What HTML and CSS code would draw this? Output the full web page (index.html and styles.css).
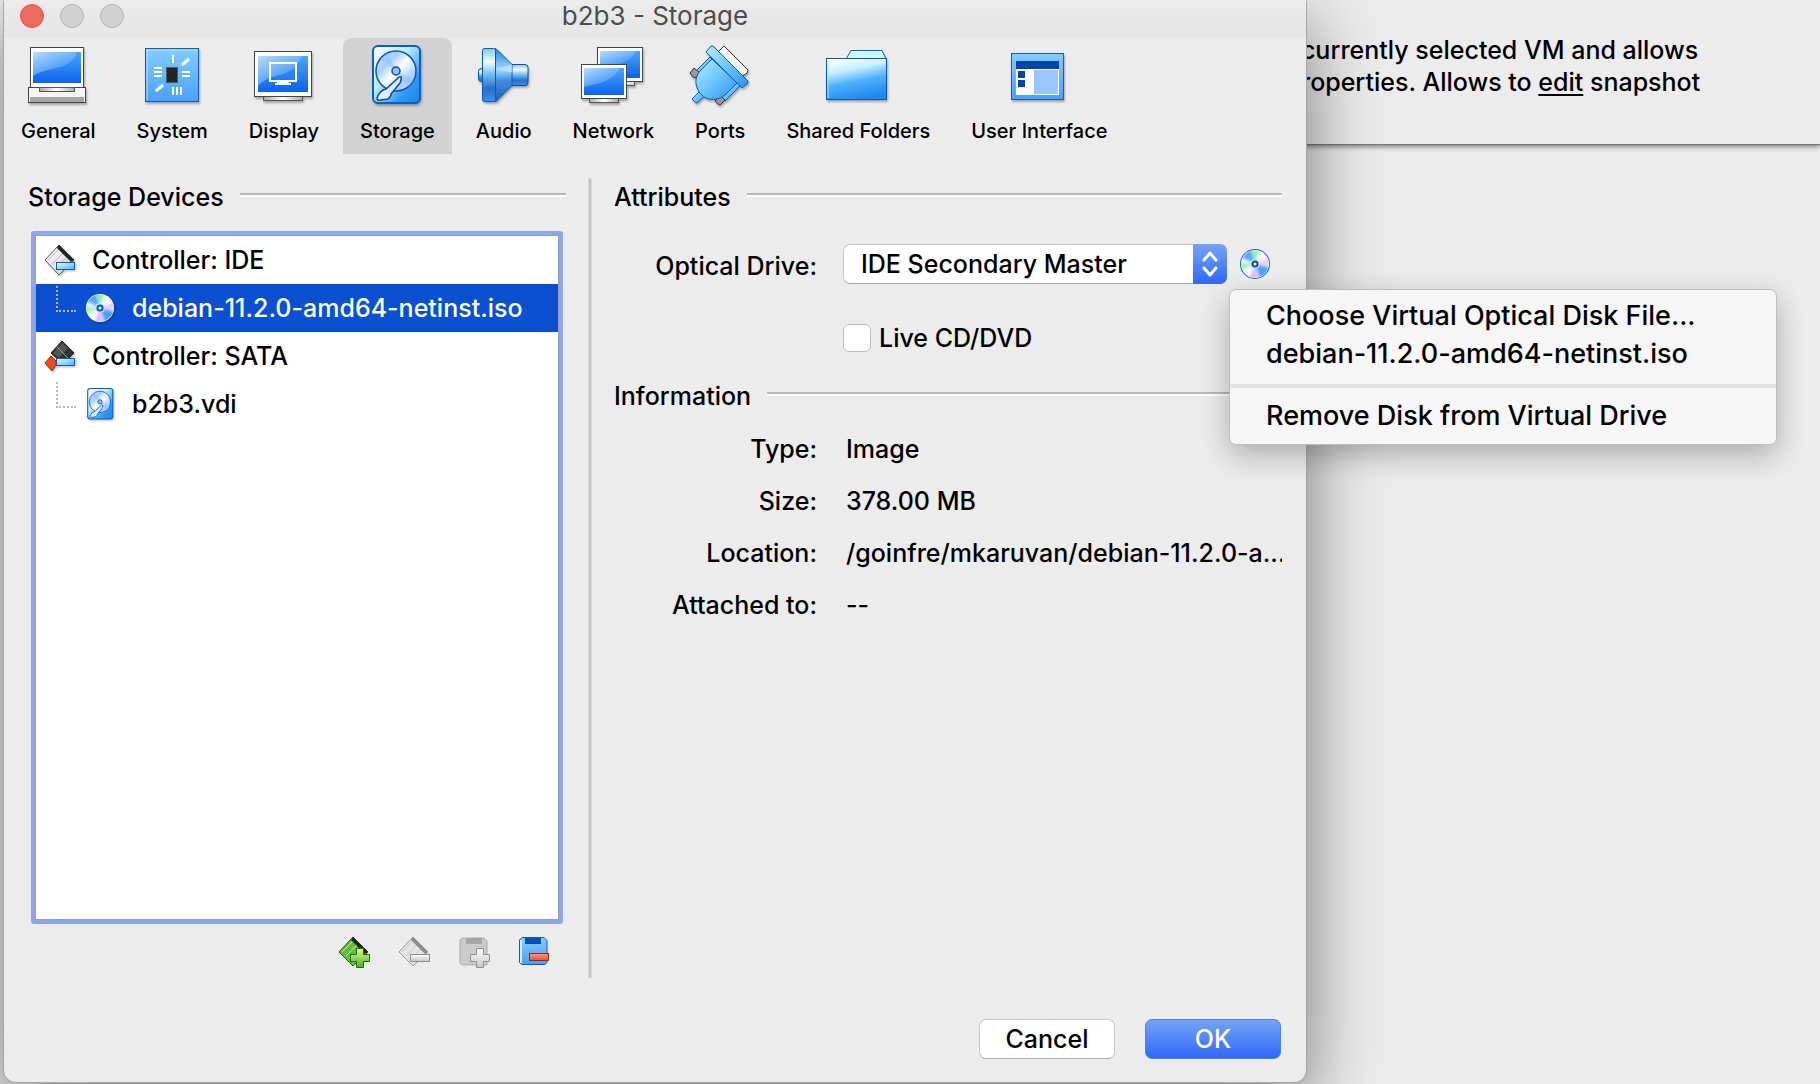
FILE: index.html
```html
<!DOCTYPE html>
<html lang="en">
<head>
	<meta charset="UTF-8">
	<title>b2b3 - Storage</title>
	<link rel="stylesheet" href="styles.css">
</head>
<body>
	<!-- shared gradients and symbols -->
	<svg class="defs" width="0" height="0" aria-hidden="true">
		<defs>
			<linearGradient id="screen" x1="0" y1="0" x2="0" y2="1">
				<stop offset="0" stop-color="#4aa5fb"/><stop offset="1" stop-color="#0c62ee"/>
			</linearGradient>
			<linearGradient id="gloss" x1="0" y1="0" x2="1" y2="1">
				<stop offset="0" stop-color="#b8dcff"/><stop offset="1" stop-color="#6cb2fb" stop-opacity="0.1"/>
			</linearGradient>
			<linearGradient id="panel" x1="0" y1="0" x2="0" y2="1">
				<stop offset="0" stop-color="#85ccff"/><stop offset="1" stop-color="#49a1fb"/>
			</linearGradient>
			<linearGradient id="silver" x1="0" y1="0" x2="0" y2="1">
				<stop offset="0" stop-color="#ffffff"/><stop offset="1" stop-color="#c4c4c4"/>
			</linearGradient>
			<linearGradient id="stand" x1="0" y1="0" x2="1" y2="0">
				<stop offset="0" stop-color="#aaaaaa"/><stop offset="0.5" stop-color="#ffffff"/><stop offset="1" stop-color="#aaaaaa"/>
			</linearGradient>
			<linearGradient id="diskbody" x1="0" y1="0" x2="1" y2="1">
				<stop offset="0" stop-color="#ffffff"/><stop offset="0.4" stop-color="#b9ecff"/><stop offset="0.75" stop-color="#2d98f2"/><stop offset="1" stop-color="#1a86ea"/>
			</linearGradient>
			<linearGradient id="platter" x1="0" y1="0" x2="1" y2="1">
				<stop offset="0" stop-color="#cfe5ff"/><stop offset="0.3" stop-color="#a6cfff"/><stop offset="0.5" stop-color="#ffffff"/><stop offset="0.75" stop-color="#a4cfff"/><stop offset="1" stop-color="#eaf5ff"/>
			</linearGradient>
			<linearGradient id="horn" x1="0" y1="0" x2="0" y2="1">
				<stop offset="0" stop-color="#7fcaf8"/><stop offset="0.25" stop-color="#f2fbff"/><stop offset="0.5" stop-color="#6bbcf4"/><stop offset="0.75" stop-color="#2a6fcc"/><stop offset="1" stop-color="#3c8de8"/>
			</linearGradient>
			<linearGradient id="cone" x1="0" y1="0" x2="0" y2="1">
				<stop offset="0" stop-color="#2a80d8"/><stop offset="0.4" stop-color="#9adcff"/><stop offset="0.6" stop-color="#3f8fe0"/><stop offset="1" stop-color="#1f5cba"/>
			</linearGradient>
			<linearGradient id="plug" x1="0" y1="0" x2="1" y2="1">
				<stop offset="0" stop-color="#b8eaff"/><stop offset="0.5" stop-color="#6ac6fc"/><stop offset="1" stop-color="#2f90e8"/>
			</linearGradient>
			<linearGradient id="folder" x1="0.2" y1="0" x2="0.5" y2="1">
				<stop offset="0" stop-color="#ffffff"/><stop offset="0.3" stop-color="#c4efff"/><stop offset="0.6" stop-color="#4db0fa"/><stop offset="1" stop-color="#2089ee"/>
			</linearGradient>
			<linearGradient id="cyan" x1="0" y1="0" x2="1" y2="1">
				<stop offset="0" stop-color="#e6fbff"/><stop offset="1" stop-color="#4ab4fa"/>
			</linearGradient>
			<linearGradient id="chip" x1="0" y1="0" x2="1" y2="1">
				<stop offset="0" stop-color="#ffffff"/><stop offset="1" stop-color="#cccccc"/>
			</linearGradient>
			<linearGradient id="green" x1="0" y1="0" x2="0" y2="1">
				<stop offset="0" stop-color="#d9f99a"/><stop offset="1" stop-color="#46b520"/>
			</linearGradient>
			<linearGradient id="red" x1="0" y1="0" x2="0" y2="1">
				<stop offset="0" stop-color="#ff9d7c"/><stop offset="1" stop-color="#ef5030"/>
			</linearGradient>
			<filter id="soften" x="0" y="0" width="1" height="1">
				<feGaussianBlur stdDeviation="1.5"/>
			</filter>
			<clipPath id="round">
				<circle cx="15" cy="16" r="13.500"/>
			</clipPath>
			<symbol id="hard-disk" viewBox="0 0 50 60">
				<rect x="1" y="1" width="47" height="57" rx="5" fill="url(#diskbody)" stroke="#0b5fc0" stroke-width="2"/>
				<circle cx="24" cy="26" r="20" fill="url(#platter)" stroke="#1050b0" stroke-width="1.5"/>
				<path d="M24 26L8 14A20 20 0 0 1 16 8ZM24 26L42 34A20 20 0 0 1 36 42Z" fill="#7fb9fb" opacity="0.4"/>
				<circle cx="24" cy="26" r="4" fill="#8cc3f8" stroke="#0c4aa4" stroke-width="1.5"/>
				<path d="M29 32q-2-1-4 2L14 44q-6 1-9 9q0 3 4 2l7-1q3-2 3-5l9-11q2-4 1-6Z" fill="#dceeff" stroke="#0c4aa4" stroke-width="1.5"/>
			</symbol>
			<symbol id="optical-disk" viewBox="0 0 30 32">
				<circle cx="15" cy="16" r="14" fill="#ffffff"/>
				<g clip-path="url(#round)">
					<g filter="url(#soften)">
						<rect width="30" height="32" fill="#f4fbff"/>
						<path d="M15 16L0 9 3 0 11 0Z" fill="#55a8ff"/>
						<path d="M15 16L12 0 20 0Z" fill="#95f58c"/>
						<path d="M15 16L30 9 30 17Z" fill="#f7c6ee"/>
						<path d="M15 16L30 19 30 30 20 32Z" fill="#45a2ff"/>
						<path d="M15 16L18 32 9 32Z" fill="#e9b2f8"/>
						<path d="M15 16L0 23 0 14Z" fill="#a0f5a4"/>
					</g>
				</g>
				<circle cx="15" cy="16" r="5" fill="#c3e2ff"/>
				<circle cx="15" cy="16" r="2.500" fill="#ffffff" stroke="#0c4fae" stroke-width="2"/>
			</symbol>
			<symbol id="chevrons" viewBox="0 0 34 40">
				<path d="M11 16l6-7 6 7M11 24l6 7 6-7" fill="none" stroke="#ffffff" stroke-width="3" stroke-linecap="round" stroke-linejoin="round"/>
			</symbol>
		</defs>
	</svg>

	<div class="desktop">
		<!-- manager window behind the dialog -->
		<div class="manager">
			<p class="hint">currently selected VM and allows<br>roperties. Allows to <a href="#">edit</a> snapshot</p>
		</div>

		<div class="dialog">
			<header class="titlebar">
				<div class="lights">
					<button class="light close" aria-label="Close"></button>
					<button class="light" aria-label="Minimize"></button>
					<button class="light" aria-label="Zoom"></button>
				</div>
				<h1>b2b3 - Storage</h1>
			</header>

			<nav class="toolbar">
				<button class="tab">
					<svg viewBox="0 0 64 64">
						<rect x="4.500" y="3.500" width="53" height="41" fill="#fff" stroke="#444"/>
						<rect x="7" y="8" width="48" height="31" fill="url(#screen)"/>
						<path d="M7 8h44q-4 13-24 17Q14 27 7 32Z" fill="url(#gloss)"/>
						<rect x="2.500" y="43.500" width="57" height="15" fill="#f4f4f4" stroke="#444"/>
						<rect x="4" y="53" width="54" height="5" fill="#a4a4a4"/>
						<rect x="13.500" y="43.500" width="35" height="4" fill="url(#stand)" stroke="#555"/>
					</svg>
					<span>General</span>
				</button>
				<button class="tab">
					<svg viewBox="0 0 64 64">
						<rect x="5.500" y="4.500" width="53" height="53" fill="url(#panel)" stroke="#0f5fb8"/>
						<path d="M7 56V6H57" fill="none" stroke="#b5e1ff"/>
						<path d="M33 11v8M14 24h8M14 28h8M14 32h8M42 28h8M42 32h8M33 43v8M37 43v8M41 43v8" fill="none" stroke="#fff" stroke-width="2"/>
						<path d="M42 21l7-6M16 47l7-6" stroke="#fff" stroke-width="3"/>
						<rect x="26.500" y="23.500" width="11" height="15" fill="#242424" stroke="#555"/>
					</svg>
					<span>System</span>
				</button>
				<button class="tab">
					<svg viewBox="0 0 64 64">
						<rect x="11.500" y="52.500" width="39" height="4" fill="url(#stand)" stroke="#555"/>
						<rect x="2.500" y="7.500" width="57" height="45" fill="#fff" stroke="#444"/>
						<rect x="6" y="12" width="50" height="36" fill="url(#screen)"/>
						<path d="M6 12h44q-6 16-26 20Q12 35 6 42Z" fill="url(#gloss)"/>
						<path d="M18 19h26v18H18ZM26 38h10v2H26ZM23 40h16" fill="none" stroke="#fff" stroke-width="2"/>
					</svg>
					<span>Display</span>
				</button>
				<button class="tab active">
					<svg viewBox="0 0 64 64"><use href="#hard-disk" x="7" y="1" width="50" height="60"/></svg>
					<span>Storage</span>
				</button>
				<button class="tab">
					<svg viewBox="0 0 64 64">
						<rect x="6.500" y="24.500" width="6" height="13" rx="3" fill="url(#horn)" stroke="#0c4aa4"/>
						<path d="M39 20.500h14q3 0 3 3v15q0 3-3 3H39Z" fill="url(#horn)" stroke="#0c4aa4"/>
						<path d="M23 4.500q2 1 3 2l14 14v21l-14 14q-1 2-3 2Z" fill="url(#cone)" stroke="#0c5ab8"/>
						<path d="M24 25L40 20.500v8Z" fill="#bfe8ff" opacity="0.7"/>
						<rect x="10.500" y="4.500" width="13" height="53" rx="2" fill="url(#horn)" stroke="#0c5ab8"/>
					</svg>
					<span>Audio</span>
				</button>
				<button class="tab">
					<svg viewBox="0 0 64 64">
						<rect x="40.500" y="36.500" width="13" height="5" fill="url(#silver)" stroke="#555"/>
						<rect x="16.500" y="3.500" width="45" height="34" fill="#fff" stroke="#444"/>
						<rect x="19" y="7" width="40" height="27" fill="url(#screen)"/>
						<path d="M19 7h36q-6 11-20 14L19 24Z" fill="url(#gloss)"/>
						<rect x="8.500" y="54.500" width="29" height="4" fill="url(#stand)" stroke="#555"/>
						<rect x="0.500" y="20.500" width="45" height="34" fill="#fff" stroke="#444"/>
						<rect x="3" y="24" width="40" height="27" fill="url(#screen)"/>
						<path d="M3 24h36q-6 11-20 15L3 43Z" fill="url(#gloss)"/>
					</svg>
					<span>Network</span>
				</button>
				<button class="tab">
					<svg viewBox="0 0 64 64">
						<path d="M30 8l6-6 24 24-1 3-6 4Z" fill="#f6f6f6" stroke="#333"/>
						<path d="M22 13l5 5-15 15-5-5Z" fill="url(#plug)" stroke="#0c5ab8"/>
						<path d="M6 24l6 5-5 5q-3-1-5-5Z" fill="#999" stroke="#333"/>
						<path d="M48 36l5 5-16 16-5-5Z" fill="url(#plug)" stroke="#0c5ab8"/>
						<path d="M32 51l5 5-5 5q-3-1-5-4Z" fill="#999" stroke="#333"/>
						<path d="M14 45l5 5-10 9q-3-1-5-4Z" fill="url(#plug)" stroke="#0c5ab8"/>
						<path d="M24 15L13 26q-6 6-5 14 2 11 12 15 11 2 18-5L49 39Z" fill="url(#plug)" stroke="#0c5ab8"/>
						<path d="M18 8l5-6h2L60 37v2l-6 5Z" fill="url(#plug)" stroke="#0c5ab8"/>
					</svg>
					<span>Ports</span>
				</button>
				<button class="tab">
					<svg viewBox="0 0 64 64">
						<path d="M20 15l5-8.500h31l4 8.500Z" fill="#c9faff" stroke="#0c63bd"/>
						<rect x="0.500" y="14.500" width="60" height="41" fill="url(#folder)" stroke="#0c55b0"/>
						<path d="M2 54V16" stroke="#9ff0ff"/>
					</svg>
					<span>Shared Folders</span>
				</button>
				<button class="tab">
					<svg viewBox="0 0 64 64">
						<rect x="4.500" y="9.500" width="52" height="46" fill="url(#panel)" stroke="#0f5fb8"/>
						<rect x="9" y="17" width="43" height="34" fill="#fff"/>
						<rect x="9" y="17" width="43" height="8" fill="#0345a8"/>
						<path d="M11 27h7v7h-7ZM11 36h7v7h-7Z" fill="#0345a8"/>
						<rect x="27" y="26" width="24" height="24" fill="#99c6ff"/>
					</svg>
					<span>User Interface</span>
				</button>
			</nav>

			<main class="content">
				<section class="devices">
					<h2 class="group-title">Storage Devices</h2>
					<ul class="tree">
						<li class="row">
							<svg class="icon" viewBox="0 0 32 32">
								<path d="M15 1L30 16 15 31 1 16Z" fill="url(#chip)" stroke="#555"/>
								<path d="M4 16l11-11M8 20l11-11M12 24l11-11" stroke="#bbb"/>
								<path d="M15 1l15 15-3 2L13 4Z" fill="#222"/>
								<rect x="12.500" y="18.500" width="18" height="7" fill="url(#cyan)" stroke="#0b5fc0"/>
							</svg>
							<span>Controller: IDE</span>
						</li>
						<li class="row child selected">
							<svg class="icon" viewBox="0 0 32 32"><use href="#optical-disk" x="1" y="0" width="30" height="32"/></svg>
							<span>debian-11.2.0-amd64-netinst.iso</span>
						</li>
						<li class="row">
							<svg class="icon" viewBox="0 0 32 32">
								<path d="M18 1l12 12-11 11L7 13Z" fill="#333" stroke="#222"/>
								<path d="M18 3l-9 10 6 5 9-10Z" fill="#555"/>
								<path d="M13 7l12 12" stroke="#999"/>
								<path d="M7 16l5 5v4l-4 6-7-8Z" fill="#f04a18" stroke="#a02808"/>
								<rect x="12.500" y="18.500" width="18" height="7" fill="url(#cyan)" stroke="#0b5fc0"/>
							</svg>
							<span>Controller: SATA</span>
						</li>
						<li class="row child">
							<svg class="icon" viewBox="0 0 32 32"><use href="#hard-disk" x="3" y="0" width="27" height="32"/></svg>
							<span>b2b3.vdi</span>
						</li>
					</ul>
					<div class="tools">
						<button class="tool" aria-label="Add controller">
							<svg viewBox="0 0 32 32">
								<path d="M15 1L30 16 15 30 1 16Z" fill="#63bd3a" stroke="#1c5c0c"/>
								<path d="M4 16l11-11M8 20l11-11M12 24l11-11" stroke="#b9ee90"/>
								<path d="M15 1l15 15-3 2L13 4Z" fill="#222"/>
								<path d="M18.500 12.500h7v6h6v7h-6v6h-7v-6h-6v-7h6Z" fill="url(#green)" stroke="#1f6b10"/>
							</svg>
						</button>
						<button class="tool" aria-label="Remove controller" disabled>
							<svg viewBox="0 0 32 32">
								<path d="M15 1L30 16 15 30 1 16Z" fill="#e4e4e4" stroke="#999"/>
								<path d="M4 16l11-11M8 20l11-11M12 24l11-11" stroke="#c8c8c8"/>
								<path d="M15 1l15 15-3 2L13 4Z" fill="#8d8d8d"/>
								<rect x="12.500" y="18.500" width="19" height="7" fill="url(#silver)" stroke="#8f8f8f"/>
							</svg>
						</button>
						<button class="tool" aria-label="Add attachment" disabled>
							<svg viewBox="0 0 32 32">
								<path d="M4 2h22l3 3v24H4l-2-2V4Z" fill="#cbcbcb" stroke="#aaa" stroke-linejoin="round"/>
								<rect x="8" y="2" width="16" height="6" fill="#a5a5a5"/>
								<path d="M18.500 12.500h7v6h6v7h-6v6h-7v-6h-6v-7h6Z" fill="url(#silver)" stroke="#8f8f8f"/>
							</svg>
						</button>
						<button class="tool" aria-label="Remove attachment">
							<svg viewBox="0 0 32 32">
								<path d="M4 1.500h22l3 3v22l-2 2H4l-2.500-2V4Z" fill="url(#panel)" stroke="#0b5fc0" stroke-linejoin="round"/>
								<path d="M3 27V4" stroke="#cdf0ff" stroke-width="2"/>
								<rect x="7" y="2" width="16" height="6" fill="#0450b4"/>
								<rect x="11.500" y="17.500" width="19" height="7" fill="url(#red)" stroke="#a8200c"/>
							</svg>
						</button>
					</div>
				</section>

				<div class="divider"></div>

				<section class="details">
					<h2 class="group-title">Attributes</h2>
					<div class="form">
						<label class="label" for="drive">Optical Drive:</label>
						<div class="drive">
							<div class="select">
								<select id="drive">
									<option>IDE Secondary Master</option>
								</select>
								<span class="arrows"><svg viewBox="0 0 34 40"><use href="#chevrons"/></svg></span>
							</div>
							<div class="disk-menu">
								<button class="disk" aria-label="Choose disk">
									<svg viewBox="0 0 32 32"><circle cx="16" cy="16" r="15" fill="#1260c0"/><use href="#optical-disk" x="1" y="0" width="30" height="32"/></svg>
								</button>
								<ul class="menu">
									<li><button>Choose Virtual Optical Disk File...</button></li>
									<li><button>debian-11.2.0-amd64-netinst.iso</button></li>
									<li class="separator"></li>
									<li><button>Remove Disk from Virtual Drive</button></li>
								</ul>
							</div>
						</div>
						<div class="check">
							<input type="checkbox" id="live">
							<label for="live">Live CD/DVD</label>
						</div>
					</div>

					<h2 class="group-title">Information</h2>
					<dl class="info">
						<dt>Type:</dt>
						<dd>Image</dd>
						<dt>Size:</dt>
						<dd>378.00 MB</dd>
						<dt>Location:</dt>
						<dd>/goinfre/mkaruvan/debian-11.2.0-a...</dd>
						<dt>Attached to:</dt>
						<dd>--</dd>
					</dl>
				</section>
			</main>

			<footer class="actions">
				<button class="btn">Cancel</button>
				<button class="btn primary">OK</button>
			</footer>
		</div>
	</div>
</body>
</html>
```

FILE: styles.css
```css
* {
	box-sizing: border-box;
}

body, ul, li, dl, dt, dd, h1, h2, p {
	margin: 0;
	padding: 0;
}

body {
	font: 500 25px/32px Inter, "Liberation Sans", sans-serif;
	color: #000;
	background-color: #ECECEC;
}

ul {
	list-style: none;
}

h1, h2 {
	font-size: inherit;
	font-weight: inherit;
}

button, select, input {
	margin: 0;
	padding: 0;
	font: inherit;
	color: inherit;
	border: 0;
	background: none;
}

svg {
	display: block;
}

.defs {
	position: absolute;
}

.desktop {
	position: relative;
	height: 100vh;
	overflow: hidden;
}

/* manager window */
.manager {
	height: 144px;
	margin-left: 50%;
	padding: 34px 0 0 calc(21.7% - 4px);
	box-shadow: 0 1px 1px #777, 0 3px 5px #888;
	white-space: nowrap;
}

.hint a {
	color: inherit;
	text-underline-offset: 3px;
	text-decoration-thickness: 2px;
}

/* dialog window */
.dialog {
	position: absolute;
	top: 0;
	left: 4px;
	bottom: 2px;
	width: 71.54%;
	display: flex;
	flex-direction: column;
	background-color: #ECECEC;
	border-radius: 3px 3px 12px 12px;
	box-shadow: 0 0 0 1px #A6A6A6, 0 24px 76px rgba(0, 0, 0, 0.5);
}

.titlebar {
	display: grid;
	grid-template-columns: 1fr auto 1fr;
	align-items: center;
	height: 38px;
	padding: 0 16px 6px;
	color: #4D4D4D;
	font-size: 26px;
	font-weight: 400;
	background: linear-gradient(#EBEBEB, #E5E5E5);
}

.lights {
	display: flex;
	gap: 16px;
}

.light {
	width: 24px;
	height: 24px;
	border: 1px solid #B5B5B5;
	border-radius: 50%;
	background-color: #D1D1D1;
}

.light.close {
	border-color: #D9554A;
	background-color: #EC6A5E;
}

.toolbar {
	display: flex;
	gap: 7px;
}

.tab {
	display: flex;
	flex-direction: column;
	align-items: center;
	gap: 8px;
	padding: 6px 17px 8px;
	font-size: 20px;
	line-height: 30px;
	white-space: nowrap;
}

.tab svg {
	width: 64px;
	height: 64px;
	margin: 0 -8px;
	filter: drop-shadow(1px 2px 1px rgba(0, 0, 0, 0.3));
}

.tab.active {
	border-radius: 8px 8px 0 0;
	background-color: #D2D2D2;
}

.content {
	flex: 1;
	display: grid;
	grid-template-columns: minmax(0, 538fr) 4px minmax(0, 668fr);
	gap: 22px;
	padding: 24px 24px 0;
}

.divider {
	border: 1px solid #DADADA;
	background-color: #C2C2C2;
}

.group-title {
	display: flex;
	align-items: center;
	gap: 16px;
	padding-top: 2px;
}

/*the rule runs a little above the middle of the text*/
.group-title:after {
	content: '';
	flex: 1;
	margin-bottom: 4px;
	border-top: 2px solid #B9B9B9;
	border-bottom: 2px solid #FFF;
}

/* storage tree */
.devices {
	display: flex;
	flex-direction: column;
	padding-top: 1px;
}

.tree {
	flex: 1;
	margin: 18px 3px 12px;
	border: 4px solid #8EA7EC;
	border-radius: 3px;
	background-color: #FFF;
	box-shadow: inset 0 0 0 1px #8F9EC4;
	padding: 1px;
}

.row {
	display: flex;
	align-items: center;
	gap: 16px;
	height: 48px;
	padding-left: 8px;
	white-space: nowrap;
}

.icon {
	width: 32px;
	height: 32px;
	filter: drop-shadow(1px 1px 1px rgba(0, 0, 0, 0.3));
}

.row.child {
	padding-left: 20px;
}

/*dotted branch line*/
.row.child:before {
	content: '';
	align-self: flex-start;
	width: 18px;
	height: 24px;
	margin: 2px -8px 0 0;
	border-left: 2px dotted #B9B9B9;
	border-bottom: 2px dotted #B9B9B9;
}

.row.selected {
	color: #FFF;
	background-color: #0A50D0;
}

.tools {
	display: flex;
	justify-content: flex-end;
	gap: 28px;
	padding: 0 16px 10px 0;
}

.tool svg {
	width: 32px;
	height: 32px;
}

/* attributes */
.details {
	padding-top: 1px;
}

.form, .info {
	display: grid;
	grid-template-columns: 203px minmax(0, 1fr);
	column-gap: 26px;
}

.form {
	row-gap: 34px;
	padding: 31px 0 24px;
}

.label, .info dt {
	text-align: right;
}

.label {
	line-height: 44px;
}

.drive {
	display: flex;
	gap: 12px;
	padding-right: 11px;
}

.select {
	position: relative;
	flex: 1;
}

.select select {
	width: 100%;
	height: 40px;
	padding: 0 50px 0 17px;
	border: 1px solid #C3C3C3;
	border-bottom-color: #A9A9A9;
	border-radius: 7px;
	background-color: #FFF;
	appearance: none;
}

.arrows {
	position: absolute;
	top: 0;
	right: 0;
	width: 34px;
	height: 40px;
	border-radius: 0 7px 7px 0;
	background: linear-gradient(#76A3F6, #2F69F6);
	pointer-events: none;
}

.disk-menu {
	position: relative;
}

.disk svg {
	width: 32px;
	height: 32px;
	margin-top: 4px;
}

.check {
	grid-column: 2;
	display: flex;
	align-items: center;
	gap: 8px;
}

.check input {
	width: 28px;
	height: 28px;
	border: 1px solid #BDBDBD;
	border-radius: 6px;
	background-color: #FFF;
	appearance: none;
}

.info {
	padding-top: 11px;
	line-height: 52px;
}

.info dd {
	overflow: hidden;
	white-space: nowrap;
	padding-left: 3px;
}

/* popup menu */
.menu {
	position: absolute;
	top: 45px;
	left: -10px;
	z-index: 1;
	padding: 7px 0 9px;
	border: 1px solid #BDBDBD;
	border-radius: 7px;
	background-color: #F6F6F6;
	box-shadow: 0 10px 30px rgba(0, 0, 0, 0.28);
	font-size: 27px;
}

.menu button {
	width: 100%;
	padding: 0 80px 0 36px;
	line-height: 38px;
	text-align: left;
	white-space: nowrap;
}

.menu .separator {
	height: 4px;
	margin: 11px 0 9px;
	background-color: #E3E3E3;
}

/* bottom buttons */
.actions {
	display: flex;
	justify-content: flex-end;
	gap: 30px;
	padding: 41px 25px 23px;
}

.btn {
	width: 136px;
	height: 40px;
	border: 1px solid #C6C6C6;
	border-bottom-color: #ABABAB;
	border-radius: 7px;
	background-color: #FFF;
}

.btn.primary {
	border-color: #4B82F0;
	color: #FFF;
	background: linear-gradient(#76A3F6, #2F69F6);
}
```
